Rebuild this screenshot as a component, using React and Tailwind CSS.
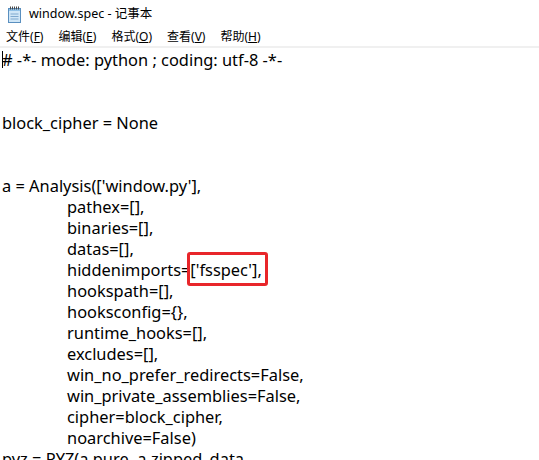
import React from "react";

const lines = [
  { t: "# -*- mode: python ; coding: utf-8 -*-", i: 0 },
  { t: "", i: 0 },
  { t: "", i: 0 },
  { t: "block_cipher = None", i: 0 },
  { t: "", i: 0 },
  { t: "", i: 0 },
  { t: "a = Analysis(['window.py'],", i: 0 },
  { t: "pathex=[],", i: 1 },
  { t: "binaries=[],", i: 1 },
  { t: "datas=[],", i: 1 },
  { t: "hiddenimports=", i: 1, box: "['fsspec'],", },
  { t: "hookspath=[],", i: 1 },
  { t: "hooksconfig={},", i: 1 },
  { t: "runtime_hooks=[],", i: 1 },
  { t: "excludes=[],", i: 1 },
  { t: "win_no_prefer_redirects=False,", i: 1 },
  { t: "win_private_assemblies=False,", i: 1 },
  { t: "cipher=block_cipher,", i: 1 },
  { t: "noarchive=False)", i: 1 },
  { t: "pyz = PYZ(a.pure, a.zipped_data,", i: 0 },
];

function NotepadIcon() {
  return (
    <svg width="16" height="17" viewBox="0 0 16 17">
      <rect x="1.5" y="2.5" width="12" height="14" fill="#cfe6f7" stroke="#5a8fbf" />
      <rect x="2" y="3" width="11" height="2" fill="#8fc1e8" />
      <line x1="3.5" y1="8" x2="11.5" y2="8" stroke="#7fa9cf" />
      <line x1="3.5" y1="10.5" x2="11.5" y2="10.5" stroke="#7fa9cf" />
      <line x1="3.5" y1="13" x2="11.5" y2="13" stroke="#7fa9cf" />
      {[3, 5, 7, 9, 11].map((x) => (
        <rect key={x} x={x} y="0.5" width="1" height="3" fill="#4a4a4a" />
      ))}
    </svg>
  );
}

const menus = [
  ["文件", "F"],
  ["编辑", "E"],
  ["格式", "O"],
  ["查看", "V"],
  ["帮助", "H"],
];

export default function App() {
  return (
    <div
      className="w-[539px] h-[460px] overflow-hidden bg-white text-black"
      style={{ fontFamily: '"Noto Sans", "Noto Sans CJK SC", sans-serif' }}
    >
      <div className="h-[28px] flex items-center pl-[7px] gap-[6px]">
        <NotepadIcon />
        <span className="text-[12.5px] leading-none text-black">window.spec - 记事本</span>
      </div>
      <div className="h-[18px] flex items-center pl-[6px] gap-[15px] text-[12px] leading-none">
        {menus.map(([c, k]) => (
          <span key={k} className="whitespace-pre">
            {c}(<span className="underline">{k}</span>)
          </span>
        ))}
      </div>
      <div className="h-[2px] bg-[#f0f0f0]" />
      <div className="relative pt-[1px] pl-[2px] text-[16.4px] leading-[21px] text-black">
        <div className="absolute left-[2px] top-[3px] w-px h-[17px] bg-black" />
        {lines.map((l, idx) => (
          <div key={idx} className={`h-[21px] whitespace-pre ${l.i ? "pl-[65px]" : ""}`}>
            {l.t}
            {l.box && (
              <span className="relative inline-block h-[21px]">
                {l.box}
                <span className="absolute left-[-3px] right-[-6px] top-[-7px] bottom-[-6px] border-[3px] border-[#e8262a] rounded-[3px]" />
              </span>
            )}
          </div>
        ))}
      </div>
    </div>
  );
}
